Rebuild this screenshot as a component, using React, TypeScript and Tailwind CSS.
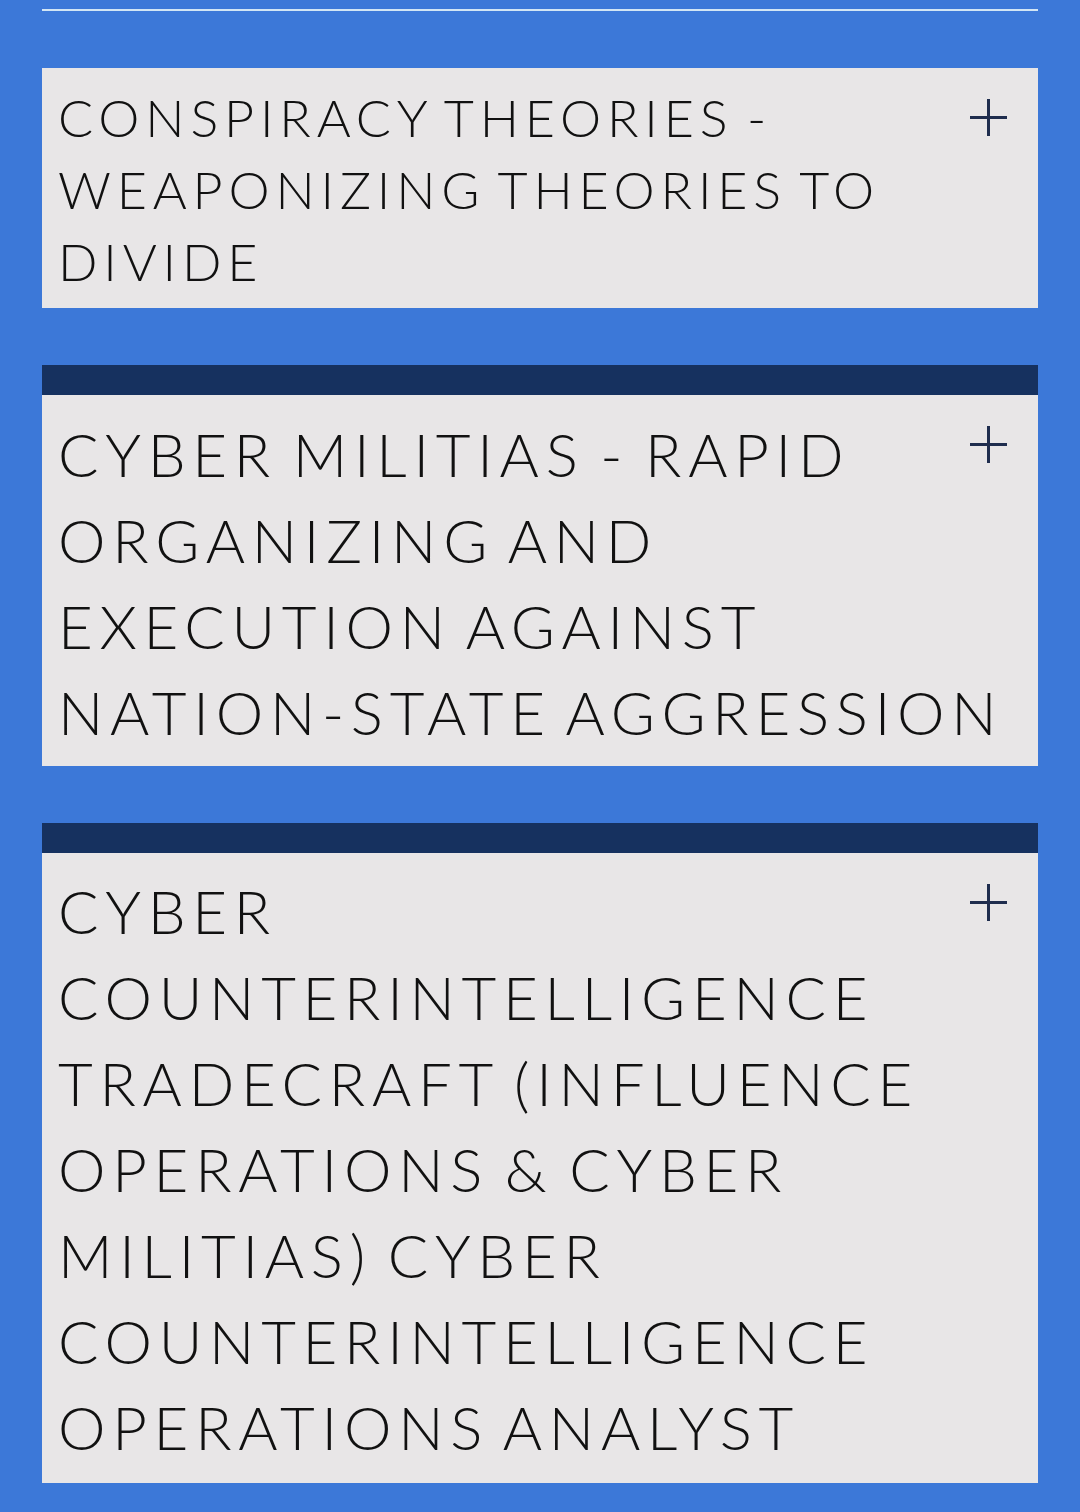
const items = [
  {
    title: "Conspiracy Theories - Weaponizing Theories to Divide",
    bar: false,
    size: "text-[52px] leading-[72px] pt-[13px] pb-[11px]",
  },
  {
    title: "Cyber Militias - Rapid Organizing and Execution Against Nation-State Aggression",
    bar: true,
    size: "text-[60px] leading-[86px] pt-[16px] pb-[11px]",
  },
  {
    title:
      "Cyber Counterintelligence Tradecraft (Influence Operations & Cyber Militias) Cyber Counterintelligence Operations Analyst",
    bar: true,
    size: "text-[60px] leading-[86px] pt-[15px] pb-[13px]",
  },
];

function Plus() {
  return (
    <svg width="37" height="37" viewBox="0 0 37 37" className="absolute right-[31px] top-[31px]">
      <path d="M18.5 0V37M0 18.5H37" stroke="#1f2d4e" strokeWidth="3" fill="none" />
    </svg>
  );
}

export default function App() {
  return (
    <div className="min-h-[1512px] bg-[#3c78d8] px-[42px] pt-[9px]" style={{ fontFamily: "Lato, 'Noto Sans', sans-serif" }}>
      <div className="h-[2px] bg-[#d2e6f5]" />
      <div className="flex flex-col gap-[57px] pt-[57px]">
        {items.map((item) => (
          <div key={item.title} className="flex flex-col">
            {item.bar && <div className="h-[30px] bg-[#16315f]" />}
            <div className={`relative bg-[#e8e6e7] pl-[16px] pr-[16px] ${item.size}`}>
              <p className="uppercase font-light tracking-[0.112em] [word-spacing:-0.12em] text-[#111111]">{item.title}</p>
              <Plus />
            </div>
          </div>
        ))}
      </div>
    </div>
  );
}
